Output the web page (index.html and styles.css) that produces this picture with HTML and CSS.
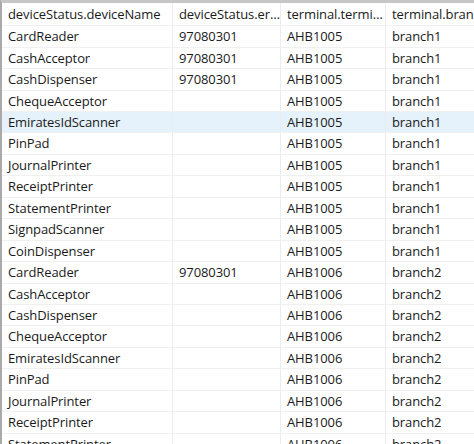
FILE: index.html
```html
<!DOCTYPE html>
<html>
<head>
<meta charset="utf-8">
<link rel="stylesheet" href="styles.css">
</head>
<body>
<div class="grid">
  <div class="row head">
    <div class="cell">deviceStatus.deviceName</div>
    <div class="cell">deviceStatus.errorCode</div>
    <div class="cell">terminal.terminalId</div>
    <div class="cell clip">terminal.branchName</div>
  </div>
  <div class="row"><div class="cell">CardReader</div><div class="cell">97080301</div><div class="cell">AHB1005</div><div class="cell clip">branch1</div></div>
  <div class="row"><div class="cell">CashAcceptor</div><div class="cell">97080301</div><div class="cell">AHB1005</div><div class="cell clip">branch1</div></div>
  <div class="row"><div class="cell">CashDispenser</div><div class="cell">97080301</div><div class="cell">AHB1005</div><div class="cell clip">branch1</div></div>
  <div class="row"><div class="cell">ChequeAcceptor</div><div class="cell"></div><div class="cell">AHB1005</div><div class="cell clip">branch1</div></div>
  <div class="row selected"><div class="cell">EmiratesIdScanner</div><div class="cell"></div><div class="cell">AHB1005</div><div class="cell clip">branch1</div></div>
  <div class="row"><div class="cell">PinPad</div><div class="cell"></div><div class="cell">AHB1005</div><div class="cell clip">branch1</div></div>
  <div class="row"><div class="cell">JournalPrinter</div><div class="cell"></div><div class="cell">AHB1005</div><div class="cell clip">branch1</div></div>
  <div class="row"><div class="cell">ReceiptPrinter</div><div class="cell"></div><div class="cell">AHB1005</div><div class="cell clip">branch1</div></div>
  <div class="row"><div class="cell">StatementPrinter</div><div class="cell"></div><div class="cell">AHB1005</div><div class="cell clip">branch1</div></div>
  <div class="row"><div class="cell">SignpadScanner</div><div class="cell"></div><div class="cell">AHB1005</div><div class="cell clip">branch1</div></div>
  <div class="row"><div class="cell">CoinDispenser</div><div class="cell"></div><div class="cell">AHB1005</div><div class="cell clip">branch1</div></div>
  <div class="row"><div class="cell">CardReader</div><div class="cell">97080301</div><div class="cell">AHB1006</div><div class="cell clip">branch2</div></div>
  <div class="row"><div class="cell">CashAcceptor</div><div class="cell"></div><div class="cell">AHB1006</div><div class="cell clip">branch2</div></div>
  <div class="row"><div class="cell">CashDispenser</div><div class="cell"></div><div class="cell">AHB1006</div><div class="cell clip">branch2</div></div>
  <div class="row"><div class="cell">ChequeAcceptor</div><div class="cell"></div><div class="cell">AHB1006</div><div class="cell clip">branch2</div></div>
  <div class="row"><div class="cell">EmiratesIdScanner</div><div class="cell"></div><div class="cell">AHB1006</div><div class="cell clip">branch2</div></div>
  <div class="row"><div class="cell">PinPad</div><div class="cell"></div><div class="cell">AHB1006</div><div class="cell clip">branch2</div></div>
  <div class="row"><div class="cell">JournalPrinter</div><div class="cell"></div><div class="cell">AHB1006</div><div class="cell clip">branch2</div></div>
  <div class="row"><div class="cell">ReceiptPrinter</div><div class="cell"></div><div class="cell">AHB1006</div><div class="cell clip">branch2</div></div>
  <div class="row"><div class="cell">StatementPrinter</div><div class="cell"></div><div class="cell">AHB1006</div><div class="cell clip">branch2</div></div>
</div>
</body>
</html>
```
FILE: styles.css
```css
html, body {
  margin: 0;
  padding: 0;
  background: #ffffff;
  overflow: hidden;
}
body {
  font-family: "Open Sans", "Noto Sans", sans-serif;
  font-size: 13px;
  letter-spacing: -0.1px;
  color: #1a1a1a;
}
.grid {
  border-top: 3px solid #c6c6c6;
  border-left: 2px solid #a9a9a9;
  height: 441px;
  overflow: hidden;
}
.row {
  display: grid;
  grid-template-columns: 171px 108px 105px 120px;
  height: 21.45px;
  line-height: 20.45px;
  box-sizing: border-box;
  border-bottom: 1px solid #f0f0f0;
}
.head {
  height: 23.3px;
  line-height: 22.3px;
}
.row.selected {
  background: #e5f1fb;
}
.cell {
  border-right: 1px solid #ececec;
  padding-left: 6px;
  white-space: nowrap;
  overflow: hidden;
  text-overflow: ellipsis;
}
.cell.clip {
  border-right: none;
  text-overflow: clip;
}
```
